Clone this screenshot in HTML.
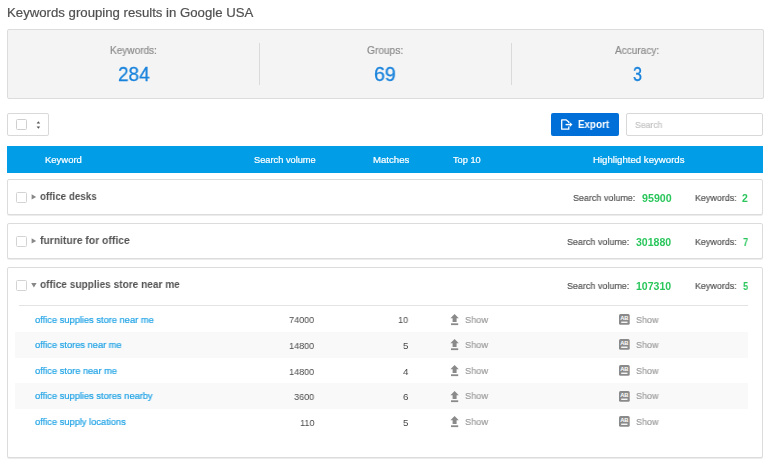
<!DOCTYPE html>
<html><head><meta charset="utf-8"><style>
html,body{margin:0;padding:0;background:#fff;width:768px;height:463px;overflow:hidden;position:relative;font-family:"Liberation Sans", sans-serif;}
.t{position:absolute;white-space:nowrap;line-height:1.117;transform-origin:0 0;will-change:transform;}
.r{position:absolute;}
</style></head><body>
<div class="t" style="left:7.20px;top:5.65px;font-size:13.2px;color:#505050;-webkit-text-stroke:0.2px #505050;">Keywords grouping results in Google USA</div>
<div class="r" style="left:7px;top:29px;width:757px;height:70px;background:#f4f4f4;border:1px solid #dcdcdc;border-radius:2px;box-sizing:border-box;"></div>
<div class="r" style="left:259px;top:43px;width:1px;height:42px;background:#dadada;"></div>
<div class="r" style="left:511px;top:43px;width:1px;height:42px;background:#dadada;"></div>
<div class="t" style="left:110.00px;top:44.70px;font-size:10.5px;color:#8c8c8c;-webkit-text-stroke:0.2px #8c8c8c;transform:scaleX(0.958);">Keywords:</div>
<div class="t" style="left:117.60px;top:63.24px;font-size:20.4px;color:#1782dc;-webkit-text-stroke:0.2px #1782dc;transform:scaleX(0.930);-webkit-text-stroke:0.3px #1782dc;">284</div>
<div class="t" style="left:367.00px;top:44.70px;font-size:10.5px;color:#8c8c8c;-webkit-text-stroke:0.2px #8c8c8c;transform:scaleX(0.967);">Groups:</div>
<div class="t" style="left:373.80px;top:63.24px;font-size:20.4px;color:#1782dc;-webkit-text-stroke:0.2px #1782dc;transform:scaleX(0.963);-webkit-text-stroke:0.3px #1782dc;">69</div>
<div class="t" style="left:614.90px;top:44.70px;font-size:10.5px;color:#8c8c8c;-webkit-text-stroke:0.2px #8c8c8c;transform:scaleX(0.957);">Accuracy:</div>
<div class="t" style="left:632.70px;top:63.24px;font-size:20.4px;color:#1782dc;-webkit-text-stroke:0.2px #1782dc;transform:scaleX(0.786);-webkit-text-stroke:0.3px #1782dc;">3</div>
<div class="r" style="left:7px;top:113px;width:42px;height:23px;border:1px solid #d9d9d9;border-radius:2px;box-sizing:border-box;background:#fff;"></div>
<div class="r" style="left:16px;top:119px;width:11px;height:11px;border:1px solid #cfcfcf;border-radius:1.5px;box-sizing:border-box;"></div>
<svg class="r" style="left:35px;top:120px" width="6" height="10" viewBox="0 0 6 10"><path d="M3.4 1.2 L5.2 3.6 L1.6 3.6 Z M3.4 8.8 L5.2 6.4 L1.6 6.4 Z" fill="#555"/></svg>
<div class="r" style="left:551px;top:113px;width:68px;height:23px;background:#0070d8;border-radius:2px;"></div>
<svg class="r" style="left:560px;top:118px" width="14" height="13" viewBox="0 0 14 13"><path d="M8.8 5.3 V4 L6.3 1.9 H1.7 V11.2 H8.8 V8.4" fill="none" stroke="#fff" stroke-width="1.3" stroke-linejoin="round"/><path d="M5.6 6.6 H10.2" stroke="#fff" stroke-width="1.4"/><path d="M9.8 4.3 L12.5 6.6 L9.8 8.9 Z" fill="#fff"/></svg>
<div class="t" style="left:578.00px;top:118.58px;font-size:10.3px;color:#fff;font-weight:bold;transform:scaleX(0.951);">Export</div>
<div class="r" style="left:626px;top:113px;width:137px;height:23px;border:1px solid #d8d8d8;border-radius:2px;box-sizing:border-box;background:#fff;"></div>
<div class="t" style="left:634.60px;top:119.67px;font-size:9.2px;color:#c4c4c4;-webkit-text-stroke:0.2px #c4c4c4;transform:scaleX(0.940);">Search</div>
<div class="r" style="left:7px;top:146px;width:756px;height:27px;background:#019de6;"></div>
<div class="t" style="left:44.90px;top:155.16px;font-size:9px;color:#fff;-webkit-text-stroke:0.2px #fff;transform:scaleX(1.051);">Keyword</div>
<div class="t" style="left:253.50px;top:155.16px;font-size:9px;color:#fff;-webkit-text-stroke:0.2px #fff;transform:scaleX(1.028);">Search volume</div>
<div class="t" style="left:373.00px;top:155.16px;font-size:9px;color:#fff;-webkit-text-stroke:0.2px #fff;transform:scaleX(1.067);">Matches</div>
<div class="t" style="left:453.30px;top:155.16px;font-size:9px;color:#fff;-webkit-text-stroke:0.2px #fff;transform:scaleX(1.024);">Top 10</div>
<div class="t" style="left:592.50px;top:155.16px;font-size:9px;color:#fff;-webkit-text-stroke:0.2px #fff;transform:scaleX(1.070);">Highlighted keywords</div>
<div class="r" style="left:7px;top:179px;width:756px;height:36px;border:1px solid #dcdcdc;border-radius:2px;box-sizing:border-box;background:#fff;box-shadow:0 1px 0 #ececec;"></div>
<div class="r" style="left:16px;top:192px;width:11px;height:11px;border:1px solid #d3d3d3;border-radius:1.5px;box-sizing:border-box;"></div>
<svg class="r" style="left:31px;top:194px" width="6" height="6" viewBox="0 0 6 6"><path d="M0.6 0.2 L5.2 2.9 L0.6 5.6 Z" fill="#888"/></svg>
<div class="t" style="left:40.20px;top:189.56px;font-size:11.2px;color:#545454;font-weight:bold;transform:scaleX(0.877);">office desks</div>
<div class="t" style="left:572.80px;top:191.94px;font-size:9.9px;color:#555;-webkit-text-stroke:0.2px #555;transform:scaleX(0.908);">Search volume:</div>
<div class="t" style="left:641.50px;top:192.80px;font-size:10.5px;color:#2ac65c;font-weight:bold;transform:scaleX(1.017);">95900</div>
<div class="t" style="left:694.60px;top:191.94px;font-size:9.9px;color:#555;-webkit-text-stroke:0.2px #555;transform:scaleX(0.902);">Keywords:</div>
<div class="t" style="left:742.30px;top:192.80px;font-size:10.5px;color:#2ac65c;font-weight:bold;transform:scaleX(0.978);">2</div>
<div class="r" style="left:7px;top:223px;width:756px;height:36px;border:1px solid #dcdcdc;border-radius:2px;box-sizing:border-box;background:#fff;box-shadow:0 1px 0 #ececec;"></div>
<div class="r" style="left:16px;top:236px;width:11px;height:11px;border:1px solid #d3d3d3;border-radius:1.5px;box-sizing:border-box;"></div>
<svg class="r" style="left:31px;top:238px" width="6" height="6" viewBox="0 0 6 6"><path d="M0.6 0.2 L5.2 2.9 L0.6 5.6 Z" fill="#888"/></svg>
<div class="t" style="left:40.20px;top:233.56px;font-size:11.2px;color:#545454;font-weight:bold;transform:scaleX(0.925);">furniture for office</div>
<div class="t" style="left:566.50px;top:235.94px;font-size:9.9px;color:#555;-webkit-text-stroke:0.2px #555;transform:scaleX(0.908);">Search volume:</div>
<div class="t" style="left:636.00px;top:236.80px;font-size:10.5px;color:#2ac65c;font-weight:bold;transform:scaleX(1.005);">301880</div>
<div class="t" style="left:694.60px;top:235.94px;font-size:9.9px;color:#555;-webkit-text-stroke:0.2px #555;transform:scaleX(0.902);">Keywords:</div>
<div class="t" style="left:742.80px;top:236.80px;font-size:10.5px;color:#2ac65c;font-weight:bold;transform:scaleX(0.892);">7</div>
<div class="r" style="left:7px;top:267px;width:756px;height:191px;border:1px solid #dcdcdc;border-radius:2px;box-sizing:border-box;background:#fff;box-shadow:0 1px 0 #ececec;"></div>
<div class="r" style="left:16px;top:280px;width:11px;height:11px;border:1px solid #d3d3d3;border-radius:1.5px;box-sizing:border-box;"></div>
<svg class="r" style="left:31px;top:282px" width="6" height="6" viewBox="0 0 6 6"><path d="M0.2 1 L5.6 1 L2.9 5.4 Z" fill="#888"/></svg>
<div class="t" style="left:40.20px;top:277.56px;font-size:11.2px;color:#545454;font-weight:bold;transform:scaleX(0.903);">office supplies store near me</div>
<div class="t" style="left:566.50px;top:279.94px;font-size:9.9px;color:#555;-webkit-text-stroke:0.2px #555;transform:scaleX(0.908);">Search volume:</div>
<div class="t" style="left:636.00px;top:280.80px;font-size:10.5px;color:#2ac65c;font-weight:bold;transform:scaleX(1.005);">107310</div>
<div class="t" style="left:694.60px;top:279.94px;font-size:9.9px;color:#555;-webkit-text-stroke:0.2px #555;transform:scaleX(0.902);">Keywords:</div>
<div class="t" style="left:742.80px;top:280.80px;font-size:10.5px;color:#2ac65c;font-weight:bold;transform:scaleX(0.892);">5</div>
<div class="r" style="left:19px;top:305px;width:729px;height:1px;background:#e3e3e3;"></div>
<div class="t" style="left:34.60px;top:314.61px;font-size:9.6px;color:#1ea2e5;-webkit-text-stroke:0.2px #1ea2e5;transform:scaleX(0.969);">office supplies store near me</div>
<div class="t" style="left:288.85px;top:315.43px;font-size:9.8px;color:#4a4a4a;-webkit-text-stroke:0.2px #4a4a4a;transform:scaleX(0.927);-webkit-text-stroke:0;">74000</div>
<div class="t" style="left:398.32px;top:315.43px;font-size:9.8px;color:#4a4a4a;-webkit-text-stroke:0.2px #4a4a4a;transform:scaleX(0.927);-webkit-text-stroke:0;">10</div>
<svg class="r" style="left:450px;top:313.8px" width="10" height="12" viewBox="0 0 10 12"><path d="M4.6 0 L8.8 4.2 H6.6 V8 H2.6 V4.2 H0.4 Z" fill="#8a8a8a"/><rect x="1" y="9.3" width="7.2" height="1.8" fill="#8a8a8a"/></svg>
<div class="t" style="left:464.90px;top:314.52px;font-size:9.7px;color:#9c9c9c;-webkit-text-stroke:0.2px #9c9c9c;transform:scaleX(0.951);">Show</div>
<svg class="r" style="left:619px;top:313.8px" width="11" height="11" viewBox="0 0 11 11"><rect x="0" y="0" width="10.7" height="10.8" rx="1.5" fill="#8a8a8a"/><text x="5.35" y="6.3" font-size="5.8" font-weight="bold" text-anchor="middle" fill="#fff" font-family="Liberation Sans">AB</text><rect x="2.2" y="7.6" width="6.3" height="1.3" fill="#fff"/></svg>
<div class="t" style="left:636.20px;top:314.52px;font-size:9.7px;color:#9c9c9c;-webkit-text-stroke:0.2px #9c9c9c;transform:scaleX(0.930);">Show</div>
<div class="r" style="left:15px;top:332.0px;width:733px;height:25.5px;background:#f9f9f9;"></div>
<div class="t" style="left:34.60px;top:340.21px;font-size:9.6px;color:#1ea2e5;-webkit-text-stroke:0.2px #1ea2e5;transform:scaleX(0.969);">office stores near me</div>
<div class="t" style="left:288.85px;top:341.03px;font-size:9.8px;color:#4a4a4a;-webkit-text-stroke:0.2px #4a4a4a;transform:scaleX(0.927);-webkit-text-stroke:0;">14800</div>
<div class="t" style="left:403.36px;top:341.03px;font-size:9.8px;color:#4a4a4a;-webkit-text-stroke:0.2px #4a4a4a;transform:scaleX(0.927);-webkit-text-stroke:0;">5</div>
<svg class="r" style="left:450px;top:339.4px" width="10" height="12" viewBox="0 0 10 12"><path d="M4.6 0 L8.8 4.2 H6.6 V8 H2.6 V4.2 H0.4 Z" fill="#8a8a8a"/><rect x="1" y="9.3" width="7.2" height="1.8" fill="#8a8a8a"/></svg>
<div class="t" style="left:464.90px;top:340.12px;font-size:9.7px;color:#9c9c9c;-webkit-text-stroke:0.2px #9c9c9c;transform:scaleX(0.951);">Show</div>
<svg class="r" style="left:619px;top:339.4px" width="11" height="11" viewBox="0 0 11 11"><rect x="0" y="0" width="10.7" height="10.8" rx="1.5" fill="#8a8a8a"/><text x="5.35" y="6.3" font-size="5.8" font-weight="bold" text-anchor="middle" fill="#fff" font-family="Liberation Sans">AB</text><rect x="2.2" y="7.6" width="6.3" height="1.3" fill="#fff"/></svg>
<div class="t" style="left:636.20px;top:340.12px;font-size:9.7px;color:#9c9c9c;-webkit-text-stroke:0.2px #9c9c9c;transform:scaleX(0.930);">Show</div>
<div class="t" style="left:34.60px;top:365.81px;font-size:9.6px;color:#1ea2e5;-webkit-text-stroke:0.2px #1ea2e5;transform:scaleX(0.969);">office store near me</div>
<div class="t" style="left:288.85px;top:366.63px;font-size:9.8px;color:#4a4a4a;-webkit-text-stroke:0.2px #4a4a4a;transform:scaleX(0.927);-webkit-text-stroke:0;">14800</div>
<div class="t" style="left:403.36px;top:366.63px;font-size:9.8px;color:#4a4a4a;-webkit-text-stroke:0.2px #4a4a4a;transform:scaleX(0.927);-webkit-text-stroke:0;">4</div>
<svg class="r" style="left:450px;top:365.0px" width="10" height="12" viewBox="0 0 10 12"><path d="M4.6 0 L8.8 4.2 H6.6 V8 H2.6 V4.2 H0.4 Z" fill="#8a8a8a"/><rect x="1" y="9.3" width="7.2" height="1.8" fill="#8a8a8a"/></svg>
<div class="t" style="left:464.90px;top:365.72px;font-size:9.7px;color:#9c9c9c;-webkit-text-stroke:0.2px #9c9c9c;transform:scaleX(0.951);">Show</div>
<svg class="r" style="left:619px;top:365.0px" width="11" height="11" viewBox="0 0 11 11"><rect x="0" y="0" width="10.7" height="10.8" rx="1.5" fill="#8a8a8a"/><text x="5.35" y="6.3" font-size="5.8" font-weight="bold" text-anchor="middle" fill="#fff" font-family="Liberation Sans">AB</text><rect x="2.2" y="7.6" width="6.3" height="1.3" fill="#fff"/></svg>
<div class="t" style="left:636.20px;top:365.72px;font-size:9.7px;color:#9c9c9c;-webkit-text-stroke:0.2px #9c9c9c;transform:scaleX(0.930);">Show</div>
<div class="r" style="left:15px;top:383.0px;width:733px;height:25.5px;background:#f9f9f9;"></div>
<div class="t" style="left:34.60px;top:391.41px;font-size:9.6px;color:#1ea2e5;-webkit-text-stroke:0.2px #1ea2e5;transform:scaleX(0.969);">office supplies stores nearby</div>
<div class="t" style="left:293.89px;top:392.23px;font-size:9.8px;color:#4a4a4a;-webkit-text-stroke:0.2px #4a4a4a;transform:scaleX(0.927);-webkit-text-stroke:0;">3600</div>
<div class="t" style="left:403.36px;top:392.23px;font-size:9.8px;color:#4a4a4a;-webkit-text-stroke:0.2px #4a4a4a;transform:scaleX(0.927);-webkit-text-stroke:0;">6</div>
<svg class="r" style="left:450px;top:390.6px" width="10" height="12" viewBox="0 0 10 12"><path d="M4.6 0 L8.8 4.2 H6.6 V8 H2.6 V4.2 H0.4 Z" fill="#8a8a8a"/><rect x="1" y="9.3" width="7.2" height="1.8" fill="#8a8a8a"/></svg>
<div class="t" style="left:464.90px;top:391.32px;font-size:9.7px;color:#9c9c9c;-webkit-text-stroke:0.2px #9c9c9c;transform:scaleX(0.951);">Show</div>
<svg class="r" style="left:619px;top:390.6px" width="11" height="11" viewBox="0 0 11 11"><rect x="0" y="0" width="10.7" height="10.8" rx="1.5" fill="#8a8a8a"/><text x="5.35" y="6.3" font-size="5.8" font-weight="bold" text-anchor="middle" fill="#fff" font-family="Liberation Sans">AB</text><rect x="2.2" y="7.6" width="6.3" height="1.3" fill="#fff"/></svg>
<div class="t" style="left:636.20px;top:391.32px;font-size:9.7px;color:#9c9c9c;-webkit-text-stroke:0.2px #9c9c9c;transform:scaleX(0.930);">Show</div>
<div class="t" style="left:34.60px;top:417.01px;font-size:9.6px;color:#1ea2e5;-webkit-text-stroke:0.2px #1ea2e5;transform:scaleX(0.969);">office supply locations</div>
<div class="t" style="left:299.61px;top:417.83px;font-size:9.8px;color:#4a4a4a;-webkit-text-stroke:0.2px #4a4a4a;transform:scaleX(0.927);-webkit-text-stroke:0;">110</div>
<div class="t" style="left:403.36px;top:417.83px;font-size:9.8px;color:#4a4a4a;-webkit-text-stroke:0.2px #4a4a4a;transform:scaleX(0.927);-webkit-text-stroke:0;">5</div>
<svg class="r" style="left:450px;top:416.2px" width="10" height="12" viewBox="0 0 10 12"><path d="M4.6 0 L8.8 4.2 H6.6 V8 H2.6 V4.2 H0.4 Z" fill="#8a8a8a"/><rect x="1" y="9.3" width="7.2" height="1.8" fill="#8a8a8a"/></svg>
<div class="t" style="left:464.90px;top:416.92px;font-size:9.7px;color:#9c9c9c;-webkit-text-stroke:0.2px #9c9c9c;transform:scaleX(0.951);">Show</div>
<svg class="r" style="left:619px;top:416.2px" width="11" height="11" viewBox="0 0 11 11"><rect x="0" y="0" width="10.7" height="10.8" rx="1.5" fill="#8a8a8a"/><text x="5.35" y="6.3" font-size="5.8" font-weight="bold" text-anchor="middle" fill="#fff" font-family="Liberation Sans">AB</text><rect x="2.2" y="7.6" width="6.3" height="1.3" fill="#fff"/></svg>
<div class="t" style="left:636.20px;top:416.92px;font-size:9.7px;color:#9c9c9c;-webkit-text-stroke:0.2px #9c9c9c;transform:scaleX(0.930);">Show</div>
</body></html>
